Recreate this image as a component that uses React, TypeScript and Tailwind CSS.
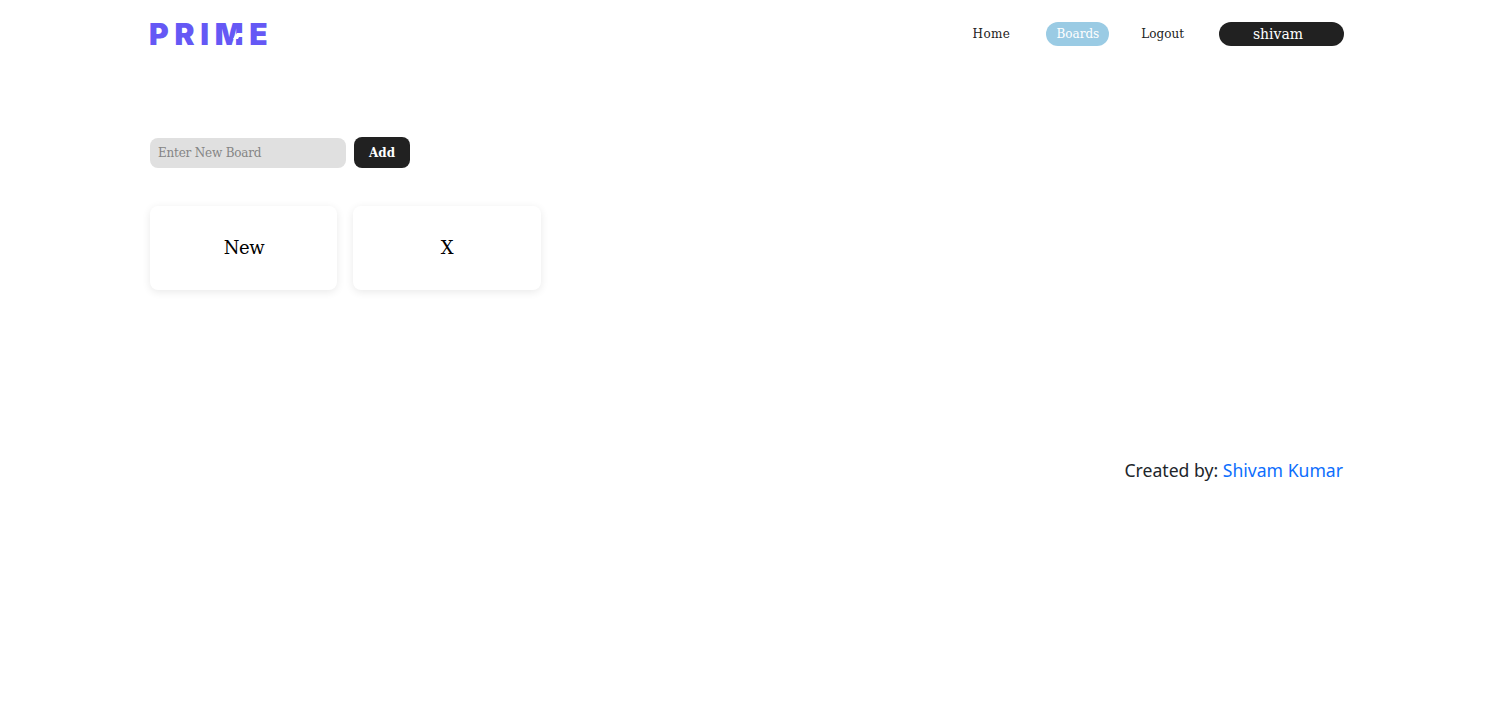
const App = () => {
  return (
    <div className="min-h-[723px] bg-white font-['DejaVu_Serif',serif]">
      <div className="mx-auto w-[1200px]">

        {/* Navbar */}
        <nav className="flex h-[68px] items-center justify-between pr-[6px]">
          <div className="-ml-px font-['Inter',sans-serif] text-[30px] leading-none font-black tracking-[5.8px] text-[#6558f5]">
            PRI
            <span className="relative inline-block">
              M
              {/* cut in the right leg of the logo's M */}
              <svg className="absolute top-[14px] right-[5px] h-[6px] w-[11px]" viewBox="0 0 11 6">
                <polygon points="0,6 4,0 11,0 11,4 6,4 5,6" fill="#ffffff" />
              </svg>
            </span>
            E
          </div>

          <div className="flex items-center text-[12px]">
            <a className="mr-[36px] tracking-[0.4px] text-[#212121]">Home</a>
            <a className="mr-[32px] flex h-6 w-[63px] items-center justify-center rounded-full bg-[#9acbe4] text-white">
              Boards
            </a>
            <a className="mr-[35px] text-[#212121]">Logout</a>
            <div className="flex h-6 w-[125px] items-center justify-center rounded-full bg-[#212121] pr-[7px] text-[14px] text-white">
              shivam
            </div>
          </div>
        </nav>

        {/* New board form */}
        <div className="mt-[69px] flex items-center gap-2 text-[12px]">
          <input
            placeholder="Enter New Board"
            className="h-[30px] w-[196px] rounded-lg bg-[#e0e0e0] px-2 tracking-[-0.2px] placeholder:text-[#858585]"
          />
          <button className="h-[31px] w-[56px] rounded-lg bg-[#212121] font-bold text-white">
            Add
          </button>
        </div>

        {/* Boards */}
        <div className="mt-[38px] flex gap-4 text-[18px] tracking-[-0.5px] text-black">
          <div className="flex h-[84px] w-[187px] items-center justify-center rounded-lg bg-white pb-[2px] pl-px shadow-[0_2px_8px_rgba(0,0,0,0.09)]">
            New
          </div>
          <div className="flex h-[84px] w-[188px] items-center justify-center rounded-lg bg-white pb-[2px] shadow-[0_2px_8px_rgba(0,0,0,0.09)]">
            X
          </div>
        </div>

        {/* Footer */}
        <p className="mt-[167px] pr-[7px] text-right font-['Noto_Sans',sans-serif] text-[17.6px] text-[#212529]">
          Created by: <a className="text-[#0d6efd]">Shivam Kumar</a>
        </p>

      </div>
    </div>
  );
};

export default App;
